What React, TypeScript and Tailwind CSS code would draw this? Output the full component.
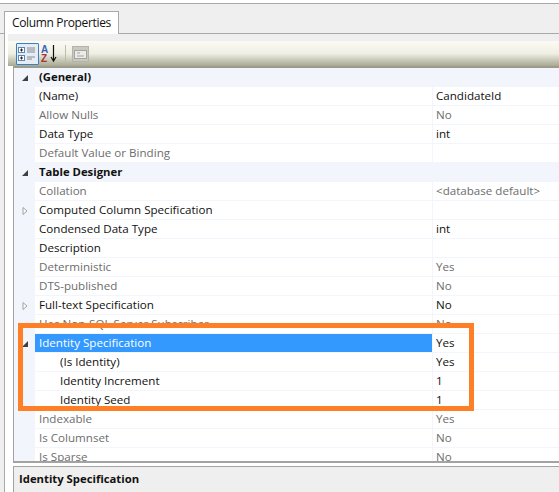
const font = { fontFamily: '"Open Sans", sans-serif' };

type Row = {
  label: string;
  value?: string;
  kind?: "head" | "dim" | "child" | "selected";
  arrow?: "open" | "closed";
};

const rows: Row[] = [
  { label: "(General)", kind: "head", arrow: "open" },
  { label: "(Name)", value: "CandidateId" },
  { label: "Allow Nulls", value: "No", kind: "dim" },
  { label: "Data Type", value: "int" },
  { label: "Default Value or Binding", kind: "dim" },
  { label: "Table Designer", kind: "head", arrow: "open" },
  { label: "Collation", value: "<database default>", kind: "dim" },
  { label: "Computed Column Specification", arrow: "closed" },
  { label: "Condensed Data Type", value: "int" },
  { label: "Description" },
  { label: "Deterministic", value: "Yes", kind: "dim" },
  { label: "DTS-published", value: "No", kind: "dim" },
  { label: "Full-text Specification", value: "No", arrow: "closed" },
  { label: "Has Non-SQL Server Subscriber", value: "No", kind: "dim" },
  { label: "Identity Specification", value: "Yes", kind: "selected", arrow: "open" },
  { label: "(Is Identity)", value: "Yes", kind: "child" },
  { label: "Identity Increment", value: "1", kind: "child" },
  { label: "Identity Seed", value: "1", kind: "child" },
  { label: "Indexable", value: "Yes", kind: "dim" },
  { label: "Is Columnset", value: "No", kind: "dim" },
  { label: "Is Sparse", value: "No", kind: "dim" },
];

function Arrow({ type }: { type: "open" | "closed" }) {
  return (
    <svg width="8" height="8" viewBox="0 0 8 8">
      {type === "open" ? (
        <path d="M7 1 V7 H1 Z" fill="#404040" />
      ) : (
        <path d="M2 0.5 L6 4 L2 7.5 Z" fill="#fff" stroke="#a0a0a0" />
      )}
    </svg>
  );
}

function PropRow({ row }: { row: Row }) {
  const head = row.kind === "head";
  const selected = row.kind === "selected";
  const dim = row.kind === "dim";
  return (
    <div className={`flex h-[19px] shrink-0 ${head ? "bg-[#f2f6fc]" : "bg-white"}`}>
      <div className="flex w-[21px] shrink-0 items-center justify-center bg-[#f2f6fc] pl-[1px]">
        {row.arrow && <Arrow type={row.arrow} />}
      </div>
      <div
        className={`flex w-[397px] shrink-0 items-center whitespace-nowrap border-b border-[#f2f6fc] pl-1 ${
          row.kind === "child" ? "pl-[25px]" : ""
        } ${selected ? "bg-[#3399ff] text-white" : ""} ${dim ? "text-[#6d6d6d]" : ""} ${
          head ? "text-[11.3px] font-bold" : ""
        }`}
      >
        {row.label}
      </div>
      <div
        className={`flex flex-1 items-center border-b border-l border-[#f2f6fc] pl-[3px] ${
          dim ? "text-[#6d6d6d]" : ""
        }`}
      >
        {row.value}
      </div>
    </div>
  );
}

function ToolbarIcons() {
  return (
    <div className="flex items-center gap-[2px] pl-[1px]">
      <div className="flex h-[22px] w-[23px] items-center justify-center rounded-[1px] border border-[#3a7fc0] bg-[#e4edf6]">
        <svg width="19" height="16" viewBox="0 0 19 16">
          <rect x="0.5" y="1.5" width="6" height="5" fill="#fff" stroke="#5b86b5" />
          <rect x="0.5" y="9.5" width="6" height="5" fill="#fff" stroke="#5b86b5" />
          <path d="M2 4h3M3.5 2.5v3M2 12h3M3.5 10.5v3" stroke="#222" />
          <path d="M9 2h8M9 4h8M9 6h8M9 11h8M9 13h5" stroke="#8a8a8a" />
        </svg>
      </div>
      <svg width="17" height="19" viewBox="0 0 17 19">
        <text x="0" y="8.5" fontSize="10" fontWeight="700" fill="#3a62b5" fontFamily="Liberation Sans">A</text>
        <text x="0" y="18" fontSize="10" fontWeight="700" fill="#a83232" fontFamily="Liberation Sans">Z</text>
        <path d="M12.5 1v15M10 13l2.5 4 2.5-4" fill="none" stroke="#111" strokeWidth="1.2" />
      </svg>
      <div className="ml-[5px] mr-[4px] h-[17px] w-px bg-[#bdbda8]" />
      <svg width="17" height="16" viewBox="0 0 17 16">
        <rect x="0.5" y="0.5" width="16" height="15" fill="#c9c9c2" stroke="#b4b4ae" />
        <rect x="2.5" y="4.5" width="12" height="8" fill="#ecece6" stroke="#a4a49e" />
        <path d="M5 7h3M5 10h7" stroke="#a4a49e" />
      </svg>
    </div>
  );
}

export default function App() {
  return (
    <div
      className="relative flex h-[492px] w-[559px] flex-col overflow-hidden bg-[#efefef] text-[11.6px] leading-none text-[#111]"
      style={font}
    >
      <div className="h-[3px] shrink-0 bg-white" />
      <div className="flex h-[31px] shrink-0 items-end border-y-[1px] border-t-[#a9a9a9] border-b-[#a9a9a9] bg-[#efefef] pl-1">
        <div className="relative top-px flex h-[23px] w-[115px] items-center border border-b-0 border-[#a9a9a9] bg-white pl-[7px] text-[12px] tracking-[-0.35px]">
          Column Properties
        </div>
      </div>
      <div className="ml-1 flex min-h-0 flex-1 flex-col border-l border-[#a9a9a9] bg-white">
        <div className="ml-[3px] flex shrink-0 flex-col bg-[#efefef] pt-[7px]">
          <div className="flex h-[25px] items-center bg-gradient-to-b from-[#fbfbf4] via-[#efefe4] to-[#a8a892] pl-[7px]">
            <ToolbarIcons />
          </div>
        </div>
        <div className="ml-[8px] flex h-[397px] shrink-0 flex-col overflow-hidden border-y-2 border-l border-[#a3a3a3] border-b-[#a3a3a3] border-t-[#9c9c8c]">
          {rows.map((row) => (
            <PropRow key={row.label} row={row} />
          ))}
        </div>
        <div className="ml-[8px] mt-[3px] flex flex-1 items-center border-t border-l border-[#a3a3a3] bg-[#efefef] pb-[2px] pl-[5px] text-[11.3px] font-bold">
          Identity Specification
        </div>
      </div>
      {/* orange callout drawn over the grid */}
      <div className="absolute left-[18px] top-[323px] h-[88px] w-[456px] border-[5px] border-[#ff7f27]" />
    </div>
  );
}
